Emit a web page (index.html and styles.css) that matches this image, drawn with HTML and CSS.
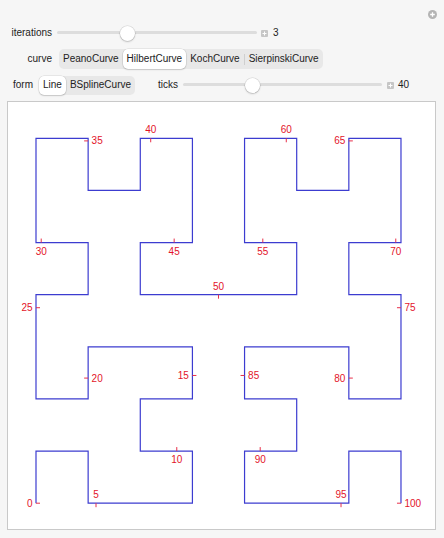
FILE: index.html
```html
<!DOCTYPE html>
<html>
<head>
<meta charset="utf-8">
<link rel="stylesheet" href="styles.css">
</head>
<body>
<div class="page">
  <svg class="corner" viewBox="0 0 9 9" width="9" height="9"><circle cx="4.5" cy="4.5" r="4.5" fill="#b4b4b4"/><path d="M4.5 2.2v4.6M2.2 4.5h4.6" stroke="#fff" stroke-width="1.3"/></svg>

  <div class="row r1">
    <span class="lbl lbl-col">iterations</span>
    <div class="slider s1"><div class="track"></div><span class="thumb" style="left:35%"></span></div>
    <svg class="pbox" viewBox="0 0 7 7" width="7" height="7"><rect width="7" height="7" rx="1" fill="#c6c6c6"/><path d="M3.5 1.5v4M1.5 3.5h4" stroke="#fff" stroke-width="1"/></svg>
    <span class="val">3</span>
  </div>

  <div class="row r2">
    <span class="lbl lbl-col">curve</span>
    <div class="seg">
      <button class="opt">PeanoCurve</button>
      <button class="opt sel">HilbertCurve</button>
      <button class="opt">KochCurve</button>
      <span class="sep"></span>
      <button class="opt">SierpinskiCurve</button>
    </div>
  </div>

  <div class="row r3">
    <span class="lbl">form</span>
    <div class="seg">
      <button class="opt sel">Line</button>
      <button class="opt">BSplineCurve</button>
    </div>
    <span class="lbl ticks-lbl">ticks</span>
    <div class="slider s2"><div class="track"></div><span class="thumb" style="left:35%"></span></div>
    <svg class="pbox" viewBox="0 0 7 7" width="7" height="7"><rect width="7" height="7" rx="1" fill="#c6c6c6"/><path d="M3.5 1.5v4M1.5 3.5h4" stroke="#fff" stroke-width="1"/></svg>
    <span class="val v2">40</span>
  </div>

  <div class="panel">
    <svg class="plot" width="427" height="427" viewBox="8 102 427 427">
      <path class="curve" d="M36 503.2 V451.07 H88.14 V503.2 H192.42 V451.07 H140.28 V398.94 H192.42 V346.81 H88.14 V398.94 H36 V294.68 H88.14 V242.55 H36 V138.29 H88.14 V190.42 H140.28 V138.29 H192.42 V242.55 H140.28 V294.68 H296.7 V242.55 H244.56 V138.29 H296.7 V190.42 H348.84 V138.29 H400.98 V242.55 H348.84 V294.68 H400.98 V398.94 H348.84 V346.81 H244.56 V398.94 H296.7 V451.07 H244.56 V503.2 H348.84 V451.07 H400.98 V503.2"/>
      <path class="ticks" d="M36 503.2h4 M96 503.2v4 M176.78 451.07v-4 M192.42 375.48h4 M88.14 378.09h-4 M36 307.71h4 M41.21 242.55v-4 M88.14 140.9h-4 M150.71 138.29v4 M174.17 242.55v-4 M218.49 294.68v4 M262.81 242.55v-4 M286.27 138.29v4 M348.84 140.9h4 M395.77 242.55v-4 M400.98 307.71h-4 M348.84 378.09h4 M244.56 375.48h-4 M260.2 451.07v-4 M341.02 503.2v4 M400.98 503.2h-4"/>
      <g class="labels">
        <text class="e" x="32.5" y="503.2">0</text>
        <text class="m" x="96" y="494.5">5</text>
        <text class="m" x="176.78" y="459.6">10</text>
        <text class="e" x="188.9" y="375.48">15</text>
        <text class="s" x="91.6" y="378.09">20</text>
        <text class="e" x="32.5" y="307.71">25</text>
        <text class="m" x="41.21" y="251.1">30</text>
        <text class="s" x="91.6" y="140.9">35</text>
        <text class="m" x="150.71" y="129.6">40</text>
        <text class="m" x="174.17" y="251.1">45</text>
        <text class="m" x="218.49" y="286">50</text>
        <text class="m" x="262.81" y="251.1">55</text>
        <text class="m" x="286.27" y="129.6">60</text>
        <text class="e" x="345.3" y="140.9">65</text>
        <text class="m" x="395.77" y="251.1">70</text>
        <text class="s" x="404.5" y="307.71">75</text>
        <text class="e" x="345.3" y="378.09">80</text>
        <text class="s" x="248.1" y="375.48">85</text>
        <text class="m" x="260.2" y="459.6">90</text>
        <text class="m" x="341.02" y="494.5">95</text>
        <text class="s" x="404.5" y="503.2">100</text>
      </g>
    </svg>
  </div>
</div>
</body>
</html>
```

FILE: styles.css
```css
html, body {
  margin: 0;
  padding: 0;
}

body {
  background: #f6f6f6;
  font-family: "Liberation Sans", Arial, sans-serif;
  font-size: 10px;
  color: #222;
}

.page {
  position: relative;
  width: 444px;
  height: 538px;
  padding-top: 25px;
  box-sizing: border-box;
}

.corner {
  position: absolute;
  left: 428px;
  top: 10px;
  display: block;
}

.row {
  display: flex;
  align-items: center;
}

.lbl {
  white-space: nowrap;
  line-height: 12px;
}

.lbl-col {
  width: 45px;
  text-align: right;
}

.r1 {
  height: 16px;
  padding-left: 7px;
}

.slider {
  position: relative;
  height: 16px;
}

.s1 {
  margin-left: 5px;
  width: 200px;
}

.s2 {
  margin-left: 5px;
  width: 199px;
}

.track {
  position: absolute;
  left: 0;
  right: 0;
  top: 6px;
  height: 3px;
  border-radius: 2px;
  background: #dddddd;
}

.thumb {
  position: absolute;
  top: 0.5px;
  width: 15px;
  height: 15px;
  margin-left: -7.5px;
  border-radius: 50%;
  background: #ffffff;
  box-shadow: 0 0 0 0.5px rgba(0, 0, 0, 0.14), 0 1px 2px rgba(0, 0, 0, 0.18);
}

.pbox {
  display: block;
  margin-left: 4px;
}

.r3 .pbox {
  margin-left: 5px;
}

.val {
  margin-left: 5px;
  line-height: 12px;
}

.v2 {
  margin-left: 4px;
}

.r2 {
  margin-top: 8px;
  height: 20px;
  padding-left: 7px;
}

.r2 .seg {
  margin-left: 7px;
}

.seg {
  display: flex;
  align-items: center;
  height: 20px;
  background: #e8e8e8;
  border-radius: 5px;
}

.opt {
  appearance: none;
  font: inherit;
  color: inherit;
  border: 0;
  margin: 0;
  background: transparent;
  padding: 0 4px;
  height: 100%;
  border-radius: 5px;
  line-height: 12px;
  white-space: nowrap;
}

.opt.sel {
  background: #ffffff;
  box-shadow: 0 0 0 0.5px rgba(0, 0, 0, 0.12), 0 1px 1.5px rgba(0, 0, 0, 0.15);
}

.sep {
  width: 1px;
  height: 11px;
  background: #cfcfcf;
}

.r3 {
  margin-top: 6px;
  height: 20px;
  padding-left: 13px;
}

.r3 .seg {
  margin-left: 6px;
  height: 19px;
}

.ticks-lbl {
  margin-left: 23px;
}

.panel {
  margin: 6px 8px 0 7px;
  height: 429px;
  border: 1px solid #c9c9c9;
  background: #ffffff;
  box-sizing: border-box;
}

.plot {
  display: block;
}

.curve {
  fill: none;
  stroke: #3c3cd0;
  stroke-width: 1.2;
}

.ticks {
  fill: none;
  stroke: #e8304a;
  stroke-width: 1;
}

.labels text {
  font-family: "Liberation Sans", Arial, sans-serif;
  font-size: 10px;
  fill: #e3142a;
  dominant-baseline: central;
}

.labels .m { text-anchor: middle; }
.labels .s { text-anchor: start; }
.labels .e { text-anchor: end; }
```
